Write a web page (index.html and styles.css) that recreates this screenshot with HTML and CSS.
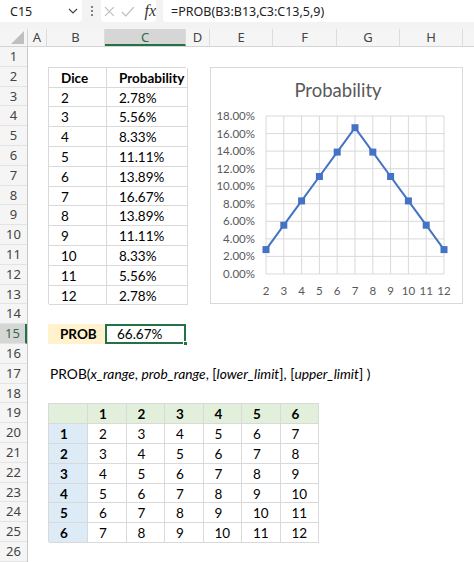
FILE: index.html
```html
<!DOCTYPE html>
<html lang="en">
<head>
  <meta charset="UTF-8" />
  <meta name="viewport" content="width=device-width, initial-scale=1.0" />
  <title>PROB function</title>
  <link rel="stylesheet" href="styles.css">
</head>

<body>
  <div class="formula-bar">
    <div class="name-box">
      <span>C15</span>
      <svg class="chevron" width="10" height="6" viewBox="0 0 10 6"><path d="M1 1 L5 5 L9 1" /></svg>
    </div>
    <svg class="dots" width="4" height="12" viewBox="0 0 4 12">
      <circle cx="2" cy="2" r="1.1" /><circle cx="2" cy="6" r="1.1" /><circle cx="2" cy="10" r="1.1" />
    </svg>
    <div class="fx-box">
      <svg class="icon-x" width="11" height="11" viewBox="0 0 11 11"><path d="M1 1 L10 10 M10 1 L1 10" /></svg>
      <svg class="icon-check" width="14" height="11" viewBox="0 0 14 11"><path d="M1 6 L5 10 L13 1" /></svg>
      <span class="fx">fx</span>
    </div>
    <div class="formula">=PROB(B3:B13,C3:C13,5,9)</div>
  </div>

  <div class="col-heads">
    <div class="corner">
      <svg width="13" height="13" viewBox="0 0 13 13"><polygon points="13,0 13,13 0,13" /></svg>
    </div>
    <div class="col-head w-a">A</div>
    <div class="col-head w-b">B</div>
    <div class="col-head w-c active">C</div>
    <div class="col-head w-d">D</div>
    <div class="col-head w-e">E</div>
    <div class="col-head w-f">F</div>
    <div class="col-head w-g">G</div>
    <div class="col-head w-h">H</div>
    <div class="col-head w-i"></div>
  </div>

  <div class="sheet">
    <div class="row-heads">
      <div class="row-head">1</div>
      <div class="row-head">2</div>
      <div class="row-head">3</div>
      <div class="row-head">4</div>
      <div class="row-head">5</div>
      <div class="row-head">6</div>
      <div class="row-head">7</div>
      <div class="row-head">8</div>
      <div class="row-head">9</div>
      <div class="row-head">10</div>
      <div class="row-head">11</div>
      <div class="row-head">12</div>
      <div class="row-head">13</div>
      <div class="row-head">14</div>
      <div class="row-head active">15</div>
      <div class="row-head">16</div>
      <div class="row-head">17</div>
      <div class="row-head">18</div>
      <div class="row-head">19</div>
      <div class="row-head">20</div>
      <div class="row-head">21</div>
      <div class="row-head">22</div>
      <div class="row-head">23</div>
      <div class="row-head">24</div>
      <div class="row-head">25</div>
      <div class="row-head">26</div>
    </div>

    <div class="cells">
      <!-- B2:C13 -->
      <div class="dice">
        <div class="cell bold">Dice</div><div class="cell bold">Probability</div>
        <div class="cell">2</div><div class="cell">2.78%</div>
        <div class="cell">3</div><div class="cell">5.56%</div>
        <div class="cell">4</div><div class="cell">8.33%</div>
        <div class="cell">5</div><div class="cell">11.11%</div>
        <div class="cell">6</div><div class="cell">13.89%</div>
        <div class="cell">7</div><div class="cell">16.67%</div>
        <div class="cell">8</div><div class="cell">13.89%</div>
        <div class="cell">9</div><div class="cell">11.11%</div>
        <div class="cell">10</div><div class="cell">8.33%</div>
        <div class="cell">11</div><div class="cell">5.56%</div>
        <div class="cell">12</div><div class="cell">2.78%</div>
      </div>

      <!-- line chart over E2:H13 -->
      <div class="chart">
        <svg width="253" height="236" viewBox="0 0 253 236">
          <text class="chart-title" x="127" y="29" text-anchor="middle">Probability</text>
          <g class="gridlines">
            <line x1="55" y1="48" x2="233" y2="48" />
            <line x1="55" y1="65.6" x2="233" y2="65.6" />
            <line x1="55" y1="83.1" x2="233" y2="83.1" />
            <line x1="55" y1="100.7" x2="233" y2="100.7" />
            <line x1="55" y1="118.2" x2="233" y2="118.2" />
            <line x1="55" y1="135.8" x2="233" y2="135.8" />
            <line x1="55" y1="153.3" x2="233" y2="153.3" />
            <line x1="55" y1="170.9" x2="233" y2="170.9" />
            <line x1="55" y1="188.4" x2="233" y2="188.4" />
            <line x1="55" y1="206" x2="233" y2="206" />
            <line x1="55" y1="48" x2="55" y2="206" />
            <line x1="72.8" y1="48" x2="72.8" y2="206" />
            <line x1="90.6" y1="48" x2="90.6" y2="206" />
            <line x1="108.4" y1="48" x2="108.4" y2="206" />
            <line x1="126.2" y1="48" x2="126.2" y2="206" />
            <line x1="144" y1="48" x2="144" y2="206" />
            <line x1="161.8" y1="48" x2="161.8" y2="206" />
            <line x1="179.6" y1="48" x2="179.6" y2="206" />
            <line x1="197.4" y1="48" x2="197.4" y2="206" />
            <line x1="215.2" y1="48" x2="215.2" y2="206" />
            <line x1="233" y1="48" x2="233" y2="206" />
          </g>
          <g class="axis-label" text-anchor="end">
            <text x="44" y="52">18.00%</text>
            <text x="44" y="69.6">16.00%</text>
            <text x="44" y="87.1">14.00%</text>
            <text x="44" y="104.7">12.00%</text>
            <text x="44" y="122.2">10.00%</text>
            <text x="44" y="139.8">8.00%</text>
            <text x="44" y="157.3">6.00%</text>
            <text x="44" y="174.9">4.00%</text>
            <text x="44" y="192.4">2.00%</text>
            <text x="44" y="210">0.00%</text>
          </g>
          <g class="axis-label" text-anchor="middle">
            <text x="55" y="227">2</text>
            <text x="72.8" y="227">3</text>
            <text x="90.6" y="227">4</text>
            <text x="108.4" y="227">5</text>
            <text x="126.2" y="227">6</text>
            <text x="144" y="227">7</text>
            <text x="161.8" y="227">8</text>
            <text x="179.6" y="227">9</text>
            <text x="197.4" y="227">10</text>
            <text x="215.2" y="227">11</text>
            <text x="233" y="227">12</text>
          </g>
          <polyline class="series" points="55,181.6 72.8,157.2 90.6,132.9 108.4,108.5 126.2,84.1 144,59.7 161.8,84.1 179.6,108.5 197.4,132.9 215.2,157.2 233,181.6" />
          <g class="markers">
            <rect x="51.5" y="178.1" width="7" height="7" />
            <rect x="69.3" y="153.7" width="7" height="7" />
            <rect x="87.1" y="129.4" width="7" height="7" />
            <rect x="104.9" y="105" width="7" height="7" />
            <rect x="122.7" y="80.6" width="7" height="7" />
            <rect x="140.5" y="56.2" width="7" height="7" />
            <rect x="158.3" y="80.6" width="7" height="7" />
            <rect x="176.1" y="105" width="7" height="7" />
            <rect x="193.9" y="129.4" width="7" height="7" />
            <rect x="211.7" y="153.7" width="7" height="7" />
            <rect x="229.5" y="178.1" width="7" height="7" />
          </g>
        </svg>
      </div>

      <div class="prob-label bold">PROB</div>
      <div class="prob-value">66.67%<span class="handle"></span></div>

      <div class="syntax">PROB(<i>x_range</i>, <i>prob_range</i>, [<i>lower_limit</i>], [<i>upper_limit</i>] )</div>

      <!-- sum of two dice -->
      <div class="sums">
        <div class="cell top"></div><div class="cell top bold">1</div><div class="cell top bold">2</div><div class="cell top bold">3</div><div class="cell top bold">4</div><div class="cell top bold">5</div><div class="cell top bold">6</div>
        <div class="cell side bold">1</div><div class="cell">2</div><div class="cell">3</div><div class="cell">4</div><div class="cell">5</div><div class="cell">6</div><div class="cell">7</div>
        <div class="cell side bold">2</div><div class="cell">3</div><div class="cell">4</div><div class="cell">5</div><div class="cell">6</div><div class="cell">7</div><div class="cell">8</div>
        <div class="cell side bold">3</div><div class="cell">4</div><div class="cell">5</div><div class="cell">6</div><div class="cell">7</div><div class="cell">8</div><div class="cell">9</div>
        <div class="cell side bold">4</div><div class="cell">5</div><div class="cell">6</div><div class="cell">7</div><div class="cell">8</div><div class="cell">9</div><div class="cell">10</div>
        <div class="cell side bold">5</div><div class="cell">6</div><div class="cell">7</div><div class="cell">8</div><div class="cell">9</div><div class="cell">10</div><div class="cell">11</div>
        <div class="cell side bold">6</div><div class="cell">7</div><div class="cell">8</div><div class="cell">9</div><div class="cell">10</div><div class="cell">11</div><div class="cell">12</div>
      </div>
    </div>
  </div>
</body>
</html>
```

FILE: styles.css
```css
* {
  box-sizing: border-box;
}

body {
  margin: 0;
  background: #fff;
  font-family: Lato, "Liberation Sans", sans-serif;
  font-size: 13.5px;
  color: #000;
  overflow: hidden;
}

.bold {
  font-weight: bold;
}

/* formula bar */
.formula-bar {
  display: flex;
  height: 29px;
  padding-bottom: 7px;
  background: #f3f3f3;
  font-family: "Noto Sans", "Open Sans", sans-serif;
  font-size: 12.5px;
  color: #222;
}

.name-box {
  width: 82px;
  display: flex;
  align-items: center;
  padding: 0 4px 0 10px;
  background: #fff;
  border-radius: 0 0 4px 0;
}

.chevron {
  margin-left: auto;
  fill: none;
  stroke: #444;
  stroke-width: 1.2;
}

.dots {
  align-self: center;
  margin: 0 7px 0 8px;
  fill: #666;
}

.fx-box {
  width: 55px;
  display: flex;
  align-items: center;
  gap: 6px;
  padding-left: 3px;
  background: #fff;
  border-radius: 0 0 4px 4px;
}

.icon-x,
.icon-check {
  fill: none;
  stroke: #bdbdbd;
  stroke-width: 1.2;
}

.fx {
  margin-left: 4px;
  font-family: "Liberation Serif", serif;
  font-style: italic;
  font-size: 16px;
  color: #333;
}

.formula {
  flex: 1;
  margin-left: 7px;
  padding-left: 8px;
  display: flex;
  align-items: center;
  background: #fff;
  border-radius: 0 0 0 4px;
}

/* column letters */
.col-heads {
  display: flex;
  height: 18px;
  background: #f5f5f5;
  border-bottom: 1px solid #d4d4d4;
  font-family: "Noto Sans", "Open Sans", sans-serif;
  font-size: 13px;
  color: #444;
}

.corner {
  width: 28px;
  display: flex;
  align-items: flex-end;
  justify-content: flex-end;
  padding: 0 3px 2px 0;
  border-right: 1px solid #d4d4d4;
}

.corner svg {
  fill: #bfbfbf;
}

.col-head {
  text-align: center;
  line-height: 17px;
  border-right: 1px solid #dcdcdc;
}

.col-head.active {
  background: #d6d6d6;
  color: #2f6b47;
  border-bottom: 2px solid #217346;
}

.w-a { width: 19px; }
.w-b { width: 58px; }
.w-c { width: 81px; }
.w-d { width: 24px; }
.w-e { width: 63px; }
.w-f { width: 64px; }
.w-g { width: 63px; }
.w-h { width: 63px; }
.w-i { flex: 1; border-right: none; }

/* sheet body */
.sheet {
  display: flex;
}

.row-heads {
  width: 28px;
  background: #f5f5f5;
  border-right: 1px solid #c8c8c8;
  font-family: "Noto Sans", "Open Sans", sans-serif;
  font-size: 13px;
  color: #444;
}

.row-head {
  height: 19.8px;
  line-height: 19px;
  text-align: center;
  border-bottom: 1px solid #e3e3e3;
}

.row-head.active {
  background: #d6d6d6;
  color: #2f6b47;
  border-right: 2px solid #217346;
}

.cells {
  flex: 1;
  display: grid;
  grid-template-columns: 19px 58px 81px 24px 63px 64px 63px 63px 1fr;
  grid-template-rows: repeat(26, 19.8px);
}

.cell {
  padding-left: 12px;
  line-height: 20px;
  border-right: 1px solid #d9d9d9;
  border-bottom: 1px solid #d9d9d9;
  white-space: nowrap;
}

.dice {
  grid-column: 2 / 4;
  grid-row: 2 / 14;
  display: grid;
  grid-template-columns: 58px 81px;
  grid-auto-rows: 19.8px;
  border-top: 1px solid #d9d9d9;
  border-left: 1px solid #d9d9d9;
  margin-left: 1px;
}

.chart {
  grid-column: 5 / 9;
  grid-row: 2 / 14;
  border: 1px solid #d9d9d9;
}

.chart svg {
  display: block;
  font-family: Lato, "Liberation Sans", sans-serif;
}

.chart-title {
  font-size: 18.5px;
  fill: #595959;
}

.gridlines line {
  stroke: #d9d9d9;
  stroke-width: 1;
}

.axis-label {
  font-size: 11.5px;
  fill: #595959;
}

.series {
  fill: none;
  stroke: #4472c4;
  stroke-width: 2;
}

.markers rect {
  fill: #4472c4;
}

.prob-label {
  grid-column: 2;
  grid-row: 15;
  margin-left: 1px;
  padding-left: 12px;
  line-height: 20px;
  background: #fff2cc;
}

.prob-value {
  grid-column: 3;
  grid-row: 15;
  position: relative;
  padding-left: 10px;
  line-height: 17px;
  border: 2px solid #217346;
}

.handle {
  position: absolute;
  right: -4px;
  bottom: -4px;
  width: 5px;
  height: 5px;
  background: #217346;
  border: 1px solid #fff;
}

.syntax {
  grid-column: 2 / -1;
  grid-row: 17;
  padding-left: 3px;
  line-height: 20px;
  font-size: 13.8px;
  white-space: nowrap;
}

.sums {
  grid-column: 2 / -1;
  grid-row: 19 / 26;
  display: grid;
  grid-template-columns: 39px repeat(6, 38.5px);
  grid-auto-rows: 19.8px;
  border-top: 1px solid #d9d9d9;
  border-left: 1px solid #d9d9d9;
  margin-left: 1px;
  justify-self: start;
}

.sums .cell {
  padding-left: 11px;
}

.sums .top {
  background: #e2efda;
}

.sums .side {
  background: #ddebf7;
}
```
